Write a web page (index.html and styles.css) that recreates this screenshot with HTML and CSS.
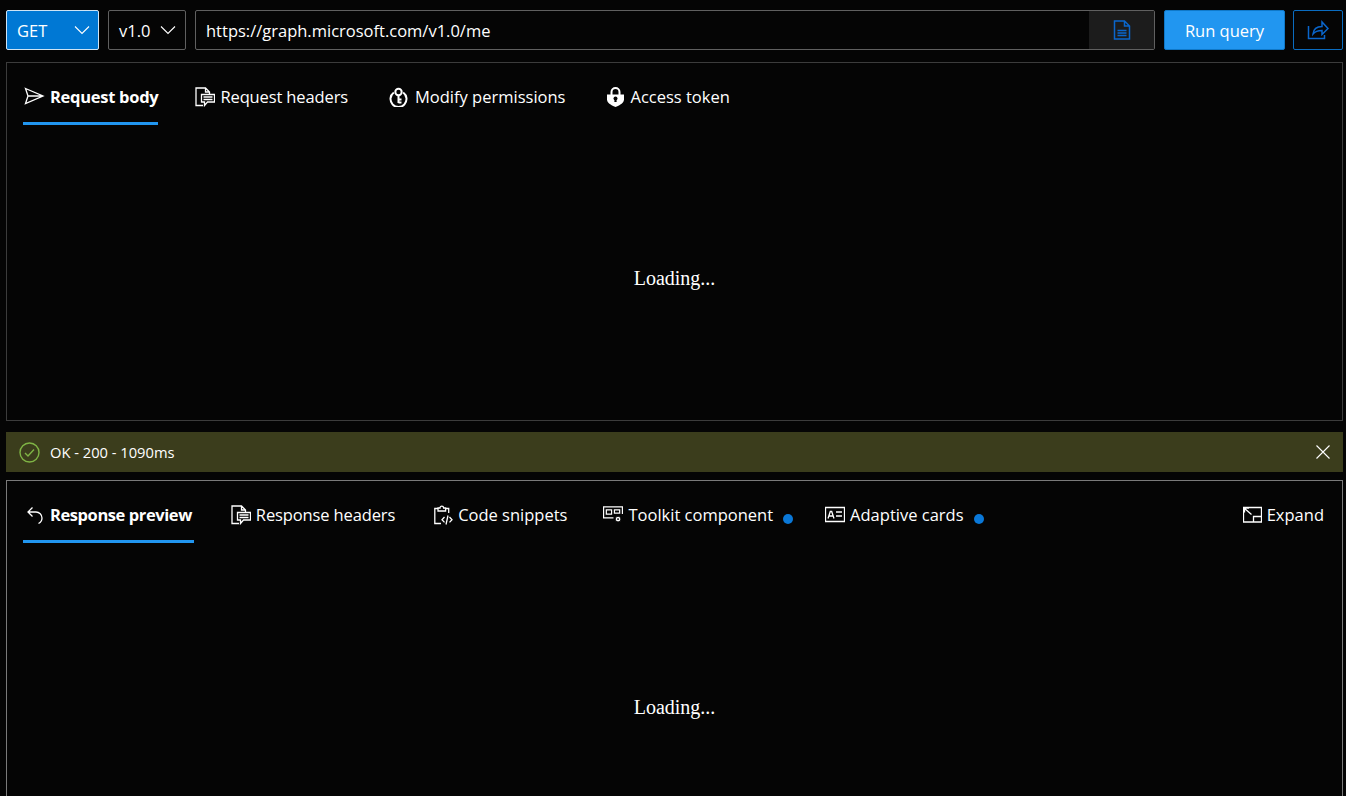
FILE: index.html
```html
<!DOCTYPE html>
<html lang="en">

<head>
    <meta charset="UTF-8">
    <title>Graph Explorer</title>
    <meta name="viewport" content="width=device-width, initial-scale=1">
    <link rel="stylesheet" href="styles.css">
</head>

<body>

    <div class="query-bar">
        <div class="dropdown method">
            <span>GET</span>
            <svg class="chevron" width="16" height="16" viewBox="0 0 16 16"><path d="M1 4.500l7 7 7-7"/></svg>
        </div>
        <div class="dropdown version">
            <span>v1.0</span>
            <svg class="chevron" width="16" height="16" viewBox="0 0 16 16"><path d="M1 4.500l7 7 7-7"/></svg>
        </div>
        <div class="url-box">
            <span class="url-text">https://graph.microsoft.com/v1.0/me</span>
            <div class="doc-btn">
                <svg class="blue-icon" width="18" height="20" viewBox="0 0 18 20"><path d="M1.500 1h10l5 5v13h-15zM11.500 1v5h5M4.500 10.500h9M4.500 13h9M4.500 15.500h9"/></svg>
            </div>
        </div>
        <button class="run-btn">Run query</button>
        <button class="share-btn">
            <svg class="blue-icon" width="22" height="20" viewBox="0 0 22 20"><path d="M1.500 6v12.500h16V15M6 14c.5-5 4-7.500 9-7.500V2l6 6.500-6 6V10.500c-4 0-7 1-9 3.500z"/></svg>
        </button>
    </div>

    <section class="panel request-panel">
        <div class="tabs">
            <div class="tab active">
                <svg class="icon" width="22" height="20" viewBox="0 0 22 20"><path d="M2.500 1.500L20 9 2.500 16.500 5 9zM5 9h15"/></svg>
                <span>Request body</span>
            </div>
            <div class="tab headers">
                <svg class="icon" width="20" height="20" viewBox="0 0 20 20"><path d="M8 18.500H1V1h9.500l4 4v2.500M10.500 1v4h4"/><path class="bubble" d="M6.500 7.500h13V15h-7l-3 3.500V15h-3z"/><path d="M8.500 10h9M8.500 12.500h9"/></svg>
                <span>Request headers</span>
            </div>
            <div class="tab">
                <svg class="icon thick" width="25" height="20" viewBox="-4 0 25 20"><path d="M4.800 5.500a8 8 0 1 0 9.400 0"/><circle cx="9.500" cy="5" r="3.200"/><path d="M9.500 8v8M9.500 12.500h3M9.500 15.500h3"/></svg>
                <span>Modify permissions</span>
            </div>
            <div class="tab">
                <svg width="23" height="20" viewBox="-5 0 23 20"><path class="lock-bow" d="M4.500 8V5a4 4 0 0 1 8 0v3"/><path fill="#fff" d="M0 7.500h17v5c0 3-3.500 5.500-8.500 7.500C3.500 18 0 15.500 0 12.500z"/><circle fill="#050505" cx="8.500" cy="11.500" r="2"/><path fill="#050505" d="M7.700 12h1.600l.4 3H7.300z"/></svg>
                <span>Access token</span>
            </div>
        </div>
        <div class="loading">Loading...</div>
    </section>

    <div class="status-bar">
        <div class="status-msg">
            <svg class="ok-icon" width="21" height="21" viewBox="0 0 21 21"><circle cx="10.500" cy="10.500" r="9.500"/><path d="M6 11l3 3 6-6.500"/></svg>
            <span>OK - 200 - 1090ms</span>
        </div>
        <svg class="close-icon" width="14" height="14" viewBox="0 0 14 14"><path d="M.5.5l13 13M13.500.5l-13 13"/></svg>
    </div>

    <section class="panel response-panel">
        <div class="tabs">
            <div class="tab active">
                <svg class="icon" width="22" height="20" viewBox="0 0 22 20"><path d="M9.500 2.500L5 7l4.500 4.500M5 7h8a6 6 0 0 1 6 6c0 2.500-1.500 4.500-3.500 5.500"/></svg>
                <span>Response preview</span>
            </div>
            <div class="tab headers">
                <svg class="icon" width="20" height="20" viewBox="0 0 20 20"><path d="M8 18.500H1V1h9.500l4 4v2.500M10.500 1v4h4"/><path class="bubble" d="M6.500 7.500h13V15h-7l-3 3.500V15h-3z"/><path d="M8.500 10h9M8.500 12.500h9"/></svg>
                <span>Response headers</span>
            </div>
            <div class="tab">
                <svg class="icon" width="21" height="20" viewBox="-2 0 21 20"><path d="M4 3.500H.8v15H7M11.500 3.500h3.200V8M4 6V3h2a1.800 1.800 0 0 1 3.600 0h2v3zM10.500 12l-2.500 2.700 2.500 2.700M15.500 12l2.500 2.700-2.500 2.700M14 10.500l-2 9"/></svg>
                <span>Code snippets</span>
            </div>
            <div class="tab toolkit">
                <svg class="icon" width="20" height="20" viewBox="0 0 21 20"><path d="M11 13H.6V1.500h19.800V9M3.500 4.500h5.500v4.500H3.500zM12 4.500h5.500V8H12z"/><circle class="gear" cx="15.800" cy="14.300" r="3"/><circle class="gear-hole" cx="15.800" cy="14.300" r="1"/></svg>
                <span>Toolkit component</span>
                <i class="dot"></i>
            </div>
            <div class="tab">
                <svg class="icon" width="20" height="20" viewBox="0 0 20 20"><path d="M.5 2.500h19v14H.5zM3 13.500l2.300-7h1.400l2.300 7M3.800 11h4.400M11 7h6M11 11h6"/></svg>
                <span>Adaptive cards</span>
                <i class="dot"></i>
            </div>
            <div class="tab expand">
                <svg class="icon" width="19" height="20" viewBox="0 0 19 20"><path d="M.5 2.500h18v14.500H.5zM1 3l7.500 6.500M1.500 7.500v-4.500h4.500M10.500 17v-5.500H18"/></svg>
                <span>Expand</span>
            </div>
        </div>
        <div class="loading">Loading...</div>
    </section>

</body>

</html>
```

FILE: styles.css
```css
* {
    box-sizing: border-box;
}

html,
body {
    height: 100%;
    overflow: hidden;
}

body {
    margin: 0;
    padding: 10px 3px 0 6px;
    background: #050505;
    color: #fff;
    font-family: "Open Sans", "Noto Sans", sans-serif;
    font-size: 16.500px;
}

svg {
    display: block;
    flex: none;
}

.query-bar {
    display: flex;
    height: 40px;
}

.dropdown {
    display: flex;
    align-items: center;
    justify-content: space-between;
    height: 40px;
    border: 1px solid #606060;
    border-radius: 2px;
}

.method {
    width: 93px;
    padding: 0 8px 0 10px;
    margin-right: 9px;
    background: #0078d4;
    border-color: #cfe4f5;
}

.version {
    width: 78px;
    padding: 0 9px 0 10px;
    margin-right: 9px;
}

.chevron path {
    fill: none;
    stroke: #fff;
    stroke-width: 1.100;
}

.url-box {
    display: flex;
    align-items: stretch;
    justify-content: space-between;
    width: 960px;
    margin-right: 9px;
    border: 1px solid #606060;
    border-radius: 2px;
}

.url-text {
    align-self: center;
    padding-left: 10px;
}

.doc-btn {
    display: flex;
    align-items: center;
    justify-content: center;
    width: 65px;
    background: #1c1c1c;
}

.blue-icon path {
    fill: none;
    stroke: #0a66cc;
    stroke-width: 1.500;
}

button {
    font: inherit;
    color: #fff;
    cursor: pointer;
}

.run-btn {
    width: 121px;
    height: 40px;
    margin-right: 8px;
    padding: 0;
    background: #2196f0;
    border: 1px solid #0f78c8;
    border-radius: 2px;
}

.share-btn {
    display: flex;
    align-items: center;
    justify-content: center;
    width: 50px;
    height: 40px;
    padding: 0;
    background: transparent;
    border: 1px solid #0a6cc0;
    border-radius: 2px;
}

.panel {
    border: 1px solid #3c3c3c;
}

.request-panel {
    height: 359px;
    margin-top: 12px;
}

.response-panel {
    height: 316px;
    margin-top: 8px;
    border-color: #7a7a7a;
    border-bottom: none;
}

.tabs {
    display: flex;
    height: 62px;
    padding: 0 18px 0 16px;
    gap: 37px;
}

.tab {
    display: flex;
    align-items: center;
    gap: 5px;
    height: 62px;
    padding-top: 8px;
    border-bottom: 3px solid transparent;
    white-space: nowrap;
}

.tab.active {
    font-weight: 700;
    letter-spacing: -0.28px;
    border-bottom-color: #2196f0;
}

.response-panel .tab.active {
    padding-right: 2px;
    letter-spacing: -0.42px;
}

.tab.headers {
    letter-spacing: -0.13px;
}

.tab.toolkit {
    margin-left: -1px;
}

.tab.expand {
    margin-left: auto;
}

.icon path,
.icon circle {
    fill: none;
    stroke: #fff;
    stroke-width: 1.300;
}

.icon.thick path,
.icon.thick circle {
    stroke-width: 2;
}

.icon .bubble {
    fill: #050505;
}

.icon .gear {
    fill: #fff;
    stroke: #050505;
    stroke-width: 1;
}

.icon .gear-hole {
    fill: #050505;
    stroke: none;
}

.lock-bow {
    fill: none;
    stroke: #fff;
    stroke-width: 2;
}

.dot {
    width: 10px;
    height: 10px;
    margin: 8px -5px 0 5px;
    background: #0a78d8;
    border-radius: 50%;
}

.loading {
    margin-top: 141px;
    text-align: center;
    font-family: "Liberation Serif", serif;
    font-size: 20px;
    line-height: 24px;
}

.response-panel .loading {
    margin-top: 152px;
}

.status-bar {
    display: flex;
    align-items: center;
    justify-content: space-between;
    height: 40px;
    margin-top: 11px;
    padding: 0 13px;
    background: #3b3d1c;
    font-size: 14.700px;
}

.status-msg {
    display: flex;
    align-items: center;
    gap: 10px;
}

.ok-icon circle,
.ok-icon path {
    fill: none;
    stroke: #7fb445;
    stroke-width: 1.400;
}

.close-icon path {
    fill: none;
    stroke: #fff;
    stroke-width: 1.100;
}
```
